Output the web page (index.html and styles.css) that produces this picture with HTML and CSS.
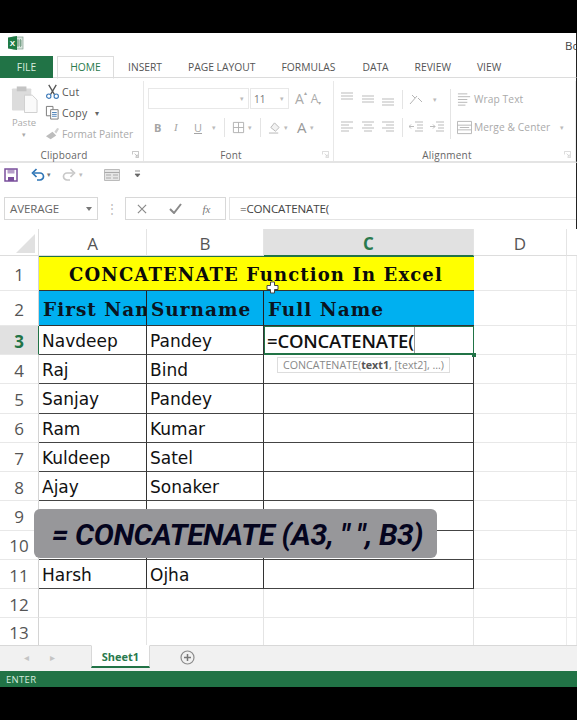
FILE: index.html
```html
<!DOCTYPE html>
<html lang="en">
<head>
<meta charset="utf-8">
<title>CONCATENATE Function In Excel</title>
<link rel="stylesheet" href="styles.css">
</head>
<body>
<div class="app">
  <div class="black-top"></div>
  <header class="titlebar">
    <svg class="xl-logo" viewBox="0 0 16 14"><rect x="5" y="1" width="10" height="12" fill="#d9e4dd" stroke="#7f9f8d" stroke-width=".7"/><path d="M10 3v8M12.5 3v8M6 5h8M6 7h8M6 9h8" stroke="#6f9a82" stroke-width=".8"/><path d="M0 1.5 9 0v14L0 12.5z" fill="#1f7a45"/><text x="1.7" y="10" class="xl-x">X</text></svg>
    <span class="account">Bo</span>
  </header>
  <nav class="tabs">
    <span class="tab-file">FILE</span>
    <span class="tab tab-home">HOME</span>
    <span class="tab tab-insert">INSERT</span>
    <span class="tab tab-layout">PAGE LAYOUT</span>
    <span class="tab tab-formulas">FORMULAS</span>
    <span class="tab tab-data">DATA</span>
    <span class="tab tab-review">REVIEW</span>
    <span class="tab tab-view">VIEW</span>
  </nav>
  <section class="ribbon">
    <div class="group group-clip">
      <div class="group-body clip-body">
        <div class="paste">
          <svg class="paste-icon" viewBox="0 0 28 28"><rect x="1" y="3" width="20" height="23" rx="1" fill="#dcdcdc"/><rect x="6" y="1" width="10" height="5" fill="#c4c4c4"/><path d="M14 10h8l5 5v13H14z" fill="#fafafa" stroke="#cfcfcf"/></svg>
          <span>Paste</span>
          <span class="caret-text">▾</span>
        </div>
        <div class="clip-list">
          <div class="clip-row"><svg viewBox="0 0 16 16" class="ico16"><path d="M4 1l6 10M12 1 6 11" stroke="#555" stroke-width="1.4" fill="none"/><circle cx="4" cy="13" r="2.3" fill="none" stroke="#3a78b8" stroke-width="1.2"/><circle cx="12" cy="13" r="2.3" fill="none" stroke="#3a78b8" stroke-width="1.2"/></svg><span>Cut</span></div>
          <div class="clip-row"><svg viewBox="0 0 16 16" class="ico16"><path d="M1.500 1.500h7v10h-7z" fill="#fff" stroke="#777"/><path d="M6 5h8v10H6z" fill="#fff" stroke="#777"/><path d="M7.500 8h5M7.500 10h5M7.500 12h5" stroke="#4a7fb5"/></svg><span>Copy</span><span class="caret-copy">▾</span></div>
          <div class="clip-row dim"><svg viewBox="0 0 16 16" class="ico16"><path d="M1 11 8 6l4 4-6 4z" fill="#bdbdbd"/><path d="M10 6l3-4 2 1-3 5z" fill="#d0d0d0"/></svg><span>Format Painter</span></div>
        </div>
      </div>
      <div class="group-label">Clipboard<svg class="launcher launcher-clip" viewBox="0 0 8 8"><path d="M.5 4V.5H7.500V7.500H4M3 3l3 3M6 4v2H4" fill="none" stroke="#aaa" stroke-width=".8"/></svg></div>
    </div>
    <div class="group group-font">
      <div class="group-body font-body">
        <div class="font-row font-row-top">
          <span class="combo combo-name"><i class="combo-caret">▾</i></span>
          <span class="combo combo-size">11<i class="combo-caret">▾</i></span>
          <span class="grow-a">A<sup>▴</sup></span>
          <span class="shrink-a">A<sup>▾</sup></span>
        </div>
        <div class="font-row font-row-bottom">
          <b class="fmt fmt-b">B</b><i class="fmt fmt-i">I</i><u class="fmt fmt-u">U</u><span class="mini">▾</span>
          <span class="vsep"></span>
          <svg class="ico14" viewBox="0 0 14 14"><path d="M1.500 1.500h11v11h-11zM7 1.500v11M1.500 7h11" fill="none" stroke="#b0b0b0"/></svg><span class="mini">▾</span>
          <span class="vsep"></span>
          <svg class="ico14" viewBox="0 0 14 14"><path d="M3 7l4-5 5 5-4 4z" fill="#f2f2f2" stroke="#b5b5b5"/><path d="M1 13h10" stroke="#d9d9d9" stroke-width="2"/></svg><span class="mini">▾</span>
          <span class="color-a">A</span><span class="mini">▾</span>
        </div>
      </div>
      <div class="group-label">Font<svg class="launcher" viewBox="0 0 8 8"><path d="M.5 4V.5H7.500V7.500H4M3 3l3 3M6 4v2H4" fill="none" stroke="#ccc" stroke-width=".8"/></svg></div>
    </div>
    <div class="group group-align">
      <div class="group-body align-body">
        <div class="align-col">
          <div class="align-row">
            <svg class="ico14" viewBox="0 0 14 14"><path d="M1 1h12M1 4h12M1 7h12" stroke="#bbb"/></svg>
            <svg class="ico14" viewBox="0 0 14 14"><path d="M1 4h12M1 7h12M1 10h12" stroke="#bbb"/></svg>
            <svg class="ico14" viewBox="0 0 14 14"><path d="M1 7h12M1 10h12M1 13h12" stroke="#bbb"/></svg>
            <span class="vsep"></span>
            <svg class="ico14" viewBox="0 0 14 14"><path d="M1 12 8 4M3 3l3 3M9 6l4 4" stroke="#b5b5b5" fill="none"/></svg><span class="mini">▾</span>
          </div>
          <div class="align-row">
            <svg class="ico14" viewBox="0 0 14 14"><path d="M1 2h12M1 5h8M1 8h12M1 11h8" stroke="#bbb"/></svg>
            <svg class="ico14" viewBox="0 0 14 14"><path d="M1 2h12M3 5h8M1 8h12M3 11h8" stroke="#bbb"/></svg>
            <svg class="ico14" viewBox="0 0 14 14"><path d="M1 2h12M5 5h8M1 8h12M5 11h8" stroke="#bbb"/></svg>
            <span class="vsep"></span>
            <svg class="ico14" viewBox="0 0 14 14"><path d="M6 2h8M8 5h6M8 8h6M6 11h8M5 6.500H0M2 4.500l-2 2 2 2" fill="none" stroke="#bbb"/></svg>
            <svg class="ico14" viewBox="0 0 14 14"><path d="M6 2h8M8 5h6M8 8h6M6 11h8M0 6.500h5M3 4.500l2 2-2 2" fill="none" stroke="#bbb"/></svg>
          </div>
        </div>
        <span class="vsep vsep-tall"></span>
        <div class="wrap-col">
          <div class="wrap-row"><svg class="ico16" viewBox="0 0 16 16"><path d="M1 2h10M1 5h13M1 8h10M1 11h10M1 14h8" stroke="#b5b5b5"/></svg><span>Wrap Text</span></div>
          <div class="wrap-row"><svg class="ico16" viewBox="0 0 16 16"><path d="M.5 1.500h15v13H.5zM.5 5.500h15M.5 10.500h15M3 8h10" fill="none" stroke="#b5b5b5"/></svg><span>Merge &amp; Center</span><span class="mini mini-merge">▾</span></div>
        </div>
      </div>
      <div class="group-label">Alignment<svg class="launcher" viewBox="0 0 8 8"><path d="M.5 4V.5H7.500V7.500H4M3 3l3 3M6 4v2H4" fill="none" stroke="#ccc" stroke-width=".8"/></svg></div>
    </div>
  </section>
  <div class="qat">
    <svg class="qat-save" viewBox="0 0 14 14"><path d="M1 1h12v12H1z" fill="none" stroke="#7a4f9c" stroke-width="1.500"/><path d="M3.500 1.500h7v4h-7z" fill="#7a4f9c" opacity=".55"/><path d="M4 9h6v4H4z" fill="#7a4f9c"/></svg>
    <svg class="qat-undo" viewBox="0 0 14 13"><path d="M3 5h6a3.500 3.500 0 0 1 0 7H6" fill="none" stroke="#2e75b6" stroke-width="1.700"/><path d="M5.500 1 1.500 5l4 4" fill="none" stroke="#2e75b6" stroke-width="1.700"/></svg>
    <span class="mini mini-dark">▾</span>
    <svg class="qat-redo" viewBox="0 0 14 13"><path d="M11 5H5a3.500 3.500 0 0 0 0 7h3" fill="none" stroke="#c8c8c8" stroke-width="1.700"/><path d="M8.500 1l4 4-4 4" fill="none" stroke="#c8c8c8" stroke-width="1.700"/></svg>
    <span class="mini">▾</span>
    <svg class="qat-form" viewBox="0 0 16 12"><path d="M.5.500h15v11H.5z" fill="#e6e6e6" stroke="#bbb"/><path d="M.5 3.500h15M2 6h5M9 6h5M2 9h5M9 9h5" stroke="#aaa"/></svg>
    <svg class="qat-more" viewBox="0 0 7 9"><path d="M1 1h5M1 4l2.500 3L6 4z" fill="#666" stroke="#666" stroke-width=".7"/></svg>
  </div>
  <div class="formula-row">
    <div class="namebox"><span>AVERAGE</span><i class="name-caret"></i></div>
    <span class="dots">⋮</span>
    <div class="fx-buttons">
      <svg class="fx-x" viewBox="0 0 11 11"><path d="M1 1l9 9M10 1l-9 9" stroke="#8a8a8a" stroke-width="1.300"/></svg>
      <svg class="fx-check" viewBox="0 0 13 11"><path d="M1 6l4 4 7-9" fill="none" stroke="#8a8a8a" stroke-width="2"/></svg>
      <i class="fx-label">fx</i>
    </div>
    <div class="formula-input">=CONCATENATE(</div>
  </div>
  <main class="sheet">
    <div class="corner"><span class="corner-tri"></span></div><div class="ch">A</div><div class="ch">B</div><div class="ch ch-active">C</div><div class="ch">D</div><div class="ch ch-end"></div>

    <div class="rh rh-tall">1</div><div class="title-cell">CONCATENATE Function In Excel</div><div class="blank blank-tall"></div><div class="blank blank-tall"></div>

    <div class="rh rh-tall">2</div><div class="head-cell">First Name</div><div class="head-cell">Surname</div><div class="head-cell head-last">Full Name</div><div class="blank blank-tall"></div><div class="blank blank-tall"></div>

    <div class="rh rh-active">3</div><div class="cell">Navdeep</div><div class="cell">Pandey</div><div class="cell cell-edit">=CONCATENATE(<span class="edit-box"></span></div><div class="blank"></div><div class="blank"></div>

    <div class="rh">4</div><div class="cell">Raj</div><div class="cell">Bind</div><div class="cell cell-c"></div><div class="blank"></div><div class="blank"></div>
    <div class="rh">5</div><div class="cell">Sanjay</div><div class="cell">Pandey</div><div class="cell cell-c"></div><div class="blank"></div><div class="blank"></div>
    <div class="rh">6</div><div class="cell">Ram</div><div class="cell">Kumar</div><div class="cell cell-c"></div><div class="blank"></div><div class="blank"></div>
    <div class="rh">7</div><div class="cell">Kuldeep</div><div class="cell">Satel</div><div class="cell cell-c"></div><div class="blank"></div><div class="blank"></div>
    <div class="rh">8</div><div class="cell">Ajay</div><div class="cell">Sonaker</div><div class="cell cell-c"></div><div class="blank"></div><div class="blank"></div>
    <div class="rh">9</div><div class="cell"></div><div class="cell"></div><div class="cell cell-c"></div><div class="blank"></div><div class="blank"></div>
    <div class="rh">10</div><div class="cell"></div><div class="cell"></div><div class="cell cell-c"></div><div class="blank"></div><div class="blank"></div>
    <div class="rh">11</div><div class="cell">Harsh</div><div class="cell">Ojha</div><div class="cell cell-c"></div><div class="blank"></div><div class="blank"></div>
    <div class="rh">12</div><div class="empty"></div><div class="empty"></div><div class="empty"></div><div class="blank"></div><div class="blank"></div>
    <div class="rh rh-last">13</div><div class="empty empty-last"></div><div class="empty empty-last"></div><div class="empty empty-last"></div><div class="blank blank-last"></div><div class="blank blank-last"></div>

    <div class="tooltip">CONCATENATE(<b>text1</b>, [text2], ...)</div>
    <span class="fill-handle"></span>
    <svg class="cursor" viewBox="0 0 13 13"><path d="M4.500 1h4v3.500H12v4H8.500V12h-4V8.500H1v-4h3.500z" fill="#fff" stroke="#444"/></svg>
    <div class="overlay">= CONCATENATE (A3, " ", B3)</div>
  </main>
  <div class="sheetbar">
    <span class="nav nav-left">◂</span><span class="nav">▸</span>
    <span class="sheet-tab">Sheet1</span>
    <svg class="add-sheet" viewBox="0 0 15 15"><circle cx="7.500" cy="7.500" r="6.500" fill="none" stroke="#8c8c8c" stroke-width="1.200"/><path d="M7.500 4v7M4 7.500h7" stroke="#777" stroke-width="1.500"/></svg>
  </div>
  <footer class="status">ENTER</footer>
  <div class="black-bottom"></div>
</div>
</body>
</html>
```

FILE: styles.css
```css
* { box-sizing: border-box; }
html, body { margin: 0; padding: 0; background: #000; }
body { width: 577px; height: 720px; overflow: hidden; font-family: "Open Sans", "Noto Sans", sans-serif; color: #555; }
.app { width: 577px; height: 720px; display: flex; flex-direction: column; background: #fff; }
.black-top { height: 33px; background: #000; flex: none; }
.black-bottom { flex: 1; background: #000; }

.titlebar { height: 23px; flex: none; display: flex; align-items: center; justify-content: space-between; padding-left: 8px; background: #fff; border-right: 1px solid #222; overflow: hidden; }
.xl-logo { width: 16px; height: 14px; margin-top: -3px; }
.xl-x { font: bold 8px "Liberation Sans", sans-serif; fill: #fff; }
.account { font: 11.500px "Open Sans", sans-serif; color: #444; width: 11px; overflow: hidden; margin-top: 1px; white-space: nowrap; }

.tabs { height: 22px; flex: none; display: flex; align-items: center; font-size: 10.300px; color: #555; border-bottom: 1px solid #dcdcdc; background: #fff; border-right: 1px solid #222; position: relative; }
.tab-file { width: 53px; height: 22px; background: #217346; color: #d6ebdd; display: flex; align-items: center; justify-content: center; }
.tab { white-space: nowrap; }
.tab-home { width: 57px; height: 23px; margin-left: 4px; display: flex; align-items: center; justify-content: center; color: #2a7a4d; border: 1px solid #dcdcdc; border-bottom: 1px solid #fff; margin-top: 1px; }
.tab-insert { margin-left: 14px; }
.tab-layout { margin-left: 26px; }
.tab-formulas { margin-left: 26px; }
.tab-data { margin-left: 27px; }
.tab-review { margin-left: 26px; }
.tab-view { margin-left: 26px; }

.ribbon { height: 85px; flex: none; display: flex; background: #fff; border-bottom: 2px solid #e4e4e4; border-right: 1px solid #222; }
.group { display: flex; flex-direction: column; border-right: 1px solid #e8e8e8; margin: 3px 0 0; flex: none; }
.group-clip { width: 144px; }
.group-font { width: 190px; }
.group-align { flex: 1; border-right: 1px solid #eee; }
.group-body { flex: 1; min-height: 0; }
.group-label { height: 12px; flex: none; display: flex; align-items: center; justify-content: center; position: relative; font-size: 10px; color: #666; letter-spacing: .2px; padding-right: 15px; }
.launcher { position: absolute; right: 4px; top: 2px; width: 7px; height: 7px; }
.launcher-clip { right: 4px; }

.clip-body { display: flex; padding-left: 10px; }
.paste { width: 28px; display: flex; flex-direction: column; align-items: center; font-size: 9.500px; color: #aaa; padding-top: 4px; }
.paste-icon { width: 27px; height: 28px; margin-bottom: 3px; flex: none; }
.caret-text { font-size: 7px; line-height: 12px; }
.clip-list { margin-left: 7px; display: flex; flex-direction: column; }
.clip-row { height: 21px; flex: none; display: flex; align-items: center; gap: 2px; font-size: 10.500px; color: #555; letter-spacing: .2px; white-space: nowrap; }
.clip-row.dim { color: #aaa; font-size: 10.200px; letter-spacing: 0; }
.ico16 { width: 15px; height: 15px; flex: none; }
.ico14 { width: 13px; height: 13px; flex: none; }
.caret-copy { font-size: 8px; margin-left: 6px; color: #666; }

.font-body { padding: 7px 0 0 4px; }
.font-row { display: flex; align-items: center; }
.font-row-top { height: 21px; }
.font-row-bottom { height: 21px; margin-top: 7.500px; padding-left: 6px; }
.combo { height: 21px; border: 1px solid #e8e8e8; display: flex; align-items: center; justify-content: flex-end; flex: none; font-size: 10px; color: #777; }
.combo-name { width: 101px; }
.combo-size { width: 39px; justify-content: space-between; padding-left: 3px; margin-left: 1px; }
.combo-caret { font-style: normal; font-size: 7px; color: #bbb; margin-right: 4px; }
.grow-a, .shrink-a { color: #aaa; font-size: 14px; display: inline-flex; }
.grow-a { margin-left: 6px; }
.shrink-a { font-size: 12px; margin-left: 4px; align-items: flex-end; }
.grow-a sup, .shrink-a sup { font-size: 6px; line-height: 8px; }
.fmt { width: 20px; font-size: 11px; color: #a5a5a5; font-family: "Liberation Serif", serif; flex: none; text-align: left; }
.fmt-b { font-family: "Open Sans", sans-serif; }
.fmt-u { font-family: "Open Sans", sans-serif; width: 15px; }
.mini { font-size: 7px; color: #bbb; margin-left: 3px; flex: none; }
.mini-dark { color: #777; margin-left: 2px; }
.vsep { width: 1px; height: 19px; background: #e4e4e4; margin: 0 7px 0 8px; flex: none; }
.color-a { font-size: 15px; color: #999; margin-left: 9px; }

.align-body { display: flex; padding: 7px 0 0 6px; }
.align-col { display: flex; flex-direction: column; gap: 6px; width: 110px; flex: none; }
.align-row { display: flex; align-items: center; gap: 6.500px; height: 22px; flex: none; }
.align-row .ico14 { width: 14px; height: 14px; }
.align-row .vsep { margin: 0; }
.vsep-tall { height: 50px; margin: 1px 6px 0 0; }
.wrap-col { display: flex; flex-direction: column; gap: 7px; padding-top: .5px; }
.wrap-row { display: flex; align-items: center; gap: 2px; height: 21px; font-size: 10.200px; color: #aaa; white-space: nowrap; letter-spacing: .1px; }
.mini-merge { margin-left: 8px; }

.qat { height: 27px; flex: none; display: flex; align-items: center; padding: 0 0 4px 4px; background: #fff; border-right: 1px solid #222; }
.qat-save { width: 14px; height: 14px; }
.qat-undo { width: 14px; height: 13px; margin-left: 13px; }
.qat-redo { width: 14px; height: 13px; margin-left: 11px; }
.qat-form { width: 16px; height: 12px; margin-left: 21px; }
.qat-more { width: 7px; height: 9px; margin-left: 14px; }

.formula-row { height: 39px; flex: none; display: flex; align-items: flex-start; padding: 7px 0 0 4px; background: #fff; border-right: 1px solid #222; }
.namebox { width: 94px; height: 23px; border: 1px solid #d8d8d8; display: flex; align-items: center; justify-content: space-between; padding: 0 4px 0 5px; font-size: 11.500px; letter-spacing: -.1px; color: #666; flex: none; }
.name-caret { width: 0; height: 0; border: 3.500px solid transparent; border-top: 4px solid #777; border-bottom: 0; margin-right: 1px; }
.dots { width: 27px; text-align: center; color: #bbb; font-size: 12px; line-height: 23px; flex: none; }
.fx-buttons { width: 101px; height: 23px; border: 1px solid #d8d8d8; display: flex; align-items: center; padding-left: 11px; flex: none; }
.fx-x { width: 10px; height: 10px; }
.fx-check { width: 13px; height: 11px; margin-left: 21.500px; }
.fx-label { font: italic 11px "Liberation Serif", serif; color: #777; margin-left: 21px; }
.formula-input { flex: 1; height: 23px; margin-left: 3px; border: 1px solid #e4e4e4; border-right: 0; display: flex; align-items: center; padding-left: 10px; font-size: 11.600px; color: #444; letter-spacing: -.2px; }

.sheet { position: relative; flex: none; height: 416px; display: grid; grid-template-columns: 39px 108px 117px 210px 93px 10px; grid-template-rows: 27px 35px 35px 29px repeat(8, 29.300px) 29px 27px; overflow: hidden; background: #fff; font-family: "DejaVu Sans", sans-serif; }
.corner { background: #fff; border-right: 1px solid #ddd; border-bottom: 1px solid #ddd; position: relative; display: flex; align-items: flex-end; justify-content: flex-end; }
.corner-tri { width: 0; height: 0; border-style: solid; border-width: 0 0 19px 19px; border-color: transparent transparent #e1e1e1 transparent; margin: 0 3px 2px 0; }
.ch { display: flex; align-items: center; justify-content: center; padding-top: 2px; font: 17px "Open Sans", sans-serif; color: #555; border-right: 1px solid #e4e4e4; border-bottom: 1px solid #ddd; }
.ch-active { background: #e1e1e1; color: #2a7a4d; font-weight: 700; border-bottom: 1px solid #217346; }
.ch-end { border-right: 0; }
.rh { display: flex; align-items: center; justify-content: center; padding-top: 2px; font: 17px "Open Sans", sans-serif; color: #555; border-right: 1px solid #d4d4d4; border-bottom: 1px solid #e8e8e8; }
.rh-active { background: #e1e1e1; color: #217346; font-weight: 700; border-right: 1px solid #217346; }
.rh-last { border-bottom: 0; }
.title-cell { grid-column: 2 / span 3; background: #ffff00; display: flex; align-items: center; justify-content: center; padding: 2px 1px 0 0; font: 700 18px "DejaVu Serif", serif; letter-spacing: 1.120px; color: #0b0b0b; border-top: 1px solid #217346; border-bottom: 1px solid #333; white-space: nowrap; }
.head-cell { background: #00b0f0; font: 700 18.500px "DejaVu Serif", serif; letter-spacing: 1px; color: #0a1420; display: flex; align-items: center; padding: 2px 0 0 4px; border-right: 1px solid #222; border-bottom: 1px solid #333; white-space: nowrap; overflow: hidden; }
.head-last { border-right: 0; }
.cell { display: flex; align-items: center; padding: 2px 0 0 3px; font-size: 17px; color: #111; border-right: 1px solid #333; border-bottom: 1.500px solid #444; white-space: nowrap; overflow: hidden; }
.cell-c { border-right: 1px solid #333; }
.cell-edit { position: relative; border: 1px solid #217346; border-bottom-width: 2px; font: 600 18.500px "Open Sans", sans-serif; letter-spacing: -.2px; padding: 0 0 0 2px; overflow: visible; color: #111; }
.edit-box { position: absolute; left: 149px; top: 0; bottom: 0; width: 1px; background: #999; }
.blank { border-right: 1px solid #ececec; border-bottom: 1px solid #e8e8e8; }
.blank-last { border-bottom: 0; }
.empty { border-right: 1px solid #e4e4e4; border-bottom: 1px solid #e8e8e8; }
.empty-last { border-bottom: 0; }
.rh-tall { border-bottom: 1px solid #e8e8e8; }

.tooltip { position: absolute; left: 277px; top: 128px; width: 173px; height: 16px; border: 1px solid #ddd; background: #fff; font: 10.700px "Open Sans", sans-serif; color: #888; display: flex; align-items: center; justify-content: center; white-space: pre; }
.tooltip b { color: #555; }
.fill-handle { position: absolute; left: 472px; top: 124px; width: 4px; height: 4px; background: #217346; }
.cursor { position: absolute; left: 266px; top: 52px; width: 13px; height: 13px; }
.overlay { position: absolute; left: 34px; top: 280px; width: 403px; height: 49px; border-radius: 6px; background: #97979a; color: #05051e; font: italic 700 30px "Roboto", "Liberation Sans", sans-serif; letter-spacing: -.4px; display: flex; align-items: center; justify-content: center; padding: 2px 0 0 4px; white-space: pre; }

.sheetbar { height: 26px; flex: none; display: flex; align-items: flex-start; background: #f1f1f1; border-top: 1px solid #d8d8d8; position: relative; }
.nav { font-size: 10px; color: #c4c4c4; width: 26px; text-align: center; line-height: 22px; flex: none; }
.nav-left { margin-left: 13px; }
.sheet-tab { width: 59px; height: 23px; margin-left: 26px; margin-top: -1px; background: #fff; border: 1px solid #d8d8d8; border-top-color: #fff; border-bottom: 2px solid #217346; color: #2a7a4d; font-size: 11px; font-weight: 700; display: flex; align-items: center; justify-content: center; }
.add-sheet { width: 15px; height: 15px; margin-left: 30px; margin-top: 4px; }
.status { height: 16px; flex: none; background: #217346; color: #d6ebdd; font-size: 9.500px; padding-left: 6px; line-height: 17px; letter-spacing: .3px; }
```
